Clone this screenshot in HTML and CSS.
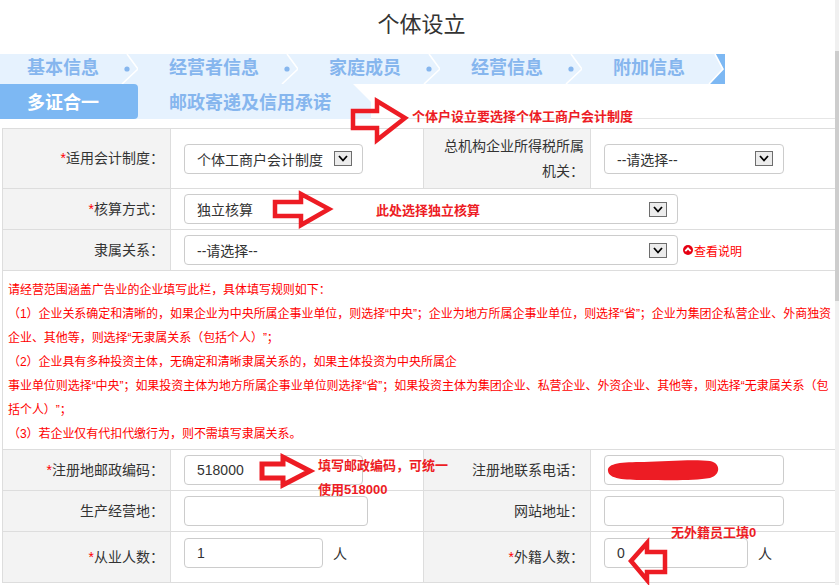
FILE: index.html
```html
<!DOCTYPE html>
<html lang="zh-CN">
<head>
<meta charset="utf-8">
<title>个体设立</title>
<link rel="stylesheet" href="styles.css">
</head>
<body>
<div class="page">
  <h1 class="title">个体设立</h1>

  <div class="steps">
    <div class="step first"><span class="step-label">基本信息</span><svg class="sep" viewBox="0 0 20 30"><circle cx="9" cy="15" r="2.6" fill="#86b6ee"/><polyline points="9,0 20,15 4,30" fill="none" stroke="#fff" stroke-width="1.6"/></svg></div>
    <div class="step"><span class="step-label">经营者信息</span><svg class="sep" viewBox="0 0 20 30"><circle cx="9" cy="15" r="2.6" fill="#86b6ee"/><polyline points="9,0 20,15 4,30" fill="none" stroke="#fff" stroke-width="1.6"/></svg></div>
    <div class="step"><span class="step-label">家庭成员</span><svg class="sep" viewBox="0 0 20 30"><circle cx="9" cy="15" r="2.6" fill="#86b6ee"/><polyline points="9,0 20,15 4,30" fill="none" stroke="#fff" stroke-width="1.6"/></svg></div>
    <div class="step"><span class="step-label">经营信息</span><svg class="sep" viewBox="0 0 20 30"><circle cx="9" cy="15" r="2.6" fill="#86b6ee"/><polyline points="9,0 20,15 4,30" fill="none" stroke="#fff" stroke-width="1.6"/></svg></div>
    <div class="step last"><span class="step-label">附加信息</span><svg class="sep end" viewBox="0 0 20 30"><rect x="0" y="0" width="20" height="30" fill="#7db8f3"/><polygon points="0,0 10,0 18,15 4,30 0,30" fill="#e6f2fe"/><polyline points="10,0 18,15 4,30" fill="none" stroke="#fff" stroke-width="1.6"/></svg></div>
  </div>

  <div class="subrow">
    <div class="subtabs">
      <div class="subtab active">多证合一</div>
      <div class="subtab">邮政寄递及信用承诺</div>
    </div>
    <div class="subrow-fill"></div>
  </div>

  <table class="form">
    <colgroup>
      <col class="c1"><col class="c2"><col class="c3"><col class="c4">
    </colgroup>
    <tr class="r1">
      <td class="lbl"><span class="req">*</span>适用会计制度：</td>
      <td class="val">
        <div class="sel w179"><span>个体工商户会计制度</span><span class="dd"><svg viewBox="0 0 16 13" width="16" height="13"><polyline points="4,4 8,8.5 12,4" fill="none" stroke="#000" stroke-width="1.8"/></svg></span></div>
      </td>
      <td class="lbl">总机构企业所得税所属机关：</td>
      <td class="val">
        <div class="sel w180"><span>--请选择--</span><span class="dd"><svg viewBox="0 0 16 13" width="16" height="13"><polyline points="4,4 8,8.5 12,4" fill="none" stroke="#000" stroke-width="1.8"/></svg></span></div>
      </td>
    </tr>
    <tr class="r2">
      <td class="lbl"><span class="req">*</span>核算方式：</td>
      <td class="val" colspan="3">
        <div class="sel wide"><span>独立核算</span><span class="dd"><svg viewBox="0 0 16 13" width="16" height="13"><polyline points="4,4 8,8.5 12,4" fill="none" stroke="#000" stroke-width="1.8"/></svg></span></div>
      </td>
    </tr>
    <tr class="r3">
      <td class="lbl">隶属关系：</td>
      <td class="val" colspan="3">
        <div class="inline">
          <div class="sel wide"><span>--请选择--</span><span class="dd"><svg viewBox="0 0 16 13" width="16" height="13"><polyline points="4,4 8,8.5 12,4" fill="none" stroke="#000" stroke-width="1.8"/></svg></span></div>
          <span class="help"><svg class="help-icon" viewBox="0 0 10 10" width="10" height="10"><circle cx="5" cy="5" r="5" fill="#e60012"/><polyline points="2.3,6.2 5,3.4 7.7,6.2" fill="none" stroke="#fff" stroke-width="1.8"/></svg>查看说明</span>
        </div>
      </td>
    </tr>
    <tr class="rn">
      <td class="note" colspan="4">
        <div class="note-text">请经营范围涵盖广告业的企业填写此栏，具体填写规则如下：<br>（1）企业关系确定和清晰的，如果企业为中央所属企事业单位，则选择“中央”；企业为地方所属企事业单位，则选择“省”；企业为集团企私营企业、外商独资<br>企业、其他等，则选择“无隶属关系（包括个人）”；<br>（2）企业具有多种投资主体，无确定和清晰隶属关系的，如果主体投资为中央所属企<br>事业单位则选择“中央”；如果投资主体为地方所属企事业单位则选择“省”；如果投资主体为集团企业、私营企业、外资企业、其他等，则选择“无隶属关系（包<br>括个人）”；<br>（3）若企业仅有代扣代缴行为，则不需填写隶属关系。</div>
      </td>
    </tr>
    <tr class="r4">
      <td class="lbl"><span class="req">*</span>注册地邮政编码：</td>
      <td class="val"><div class="inp w179">518000</div></td>
      <td class="lbl">注册地联系电话：</td>
      <td class="val"><div class="inp w180"></div></td>
    </tr>
    <tr class="r5">
      <td class="lbl">生产经营地：</td>
      <td class="val"><div class="inp w184"></div></td>
      <td class="lbl">网站地址：</td>
      <td class="val"><div class="inp w180"></div></td>
    </tr>
    <tr class="r6">
      <td class="lbl"><span class="req">*</span>从业人数：</td>
      <td class="val"><div class="inline"><div class="inp w139">1</div><span class="unit">人</span></div></td>
      <td class="lbl"><span class="req">*</span>外籍人数：</td>
      <td class="val"><div class="inline"><div class="inp w144">0</div><span class="unit">人</span></div></td>
    </tr>
  </table>

  <!-- annotations drawn over the screenshot -->
  <svg class="mark arrow1" width="62" height="48" viewBox="0 0 62 48"><polygon points="5,14 29,14 29,4 57,21 29,43 29,31 5,31" fill="none" stroke="#ed1c24" stroke-width="4.5"/></svg>
  <div class="ann ann1">个体户设立要选择个体工商户会计制度</div>

  <svg class="mark arrow2" width="64" height="40" viewBox="0 0 64 40"><polygon points="4,12 30,12 30,4 58,19 30,35 30,26 4,26" fill="none" stroke="#ed1c24" stroke-width="4.5"/></svg>
  <div class="ann ann2">此处选择独立核算</div>

  <svg class="mark arrow3" width="56" height="35" viewBox="0 0 56 35"><polygon points="4,10 25,10 25,3 52,17 25,31 25,24 4,24" fill="none" stroke="#ed1c24" stroke-width="5"/></svg>
  <div class="ann ann3">填写邮政编码，可统一<br>使用518000</div>

  <svg class="mark blob" width="118" height="26" viewBox="0 0 118 26"><path d="M4,14 C3,6 18,5 40,5 C62,4 92,2 106,4 C117,6 117,18 106,21 C90,24 62,23 40,23 C20,23 5,22 4,14 Z" fill="#ed1c24"/></svg>

  <div class="ann ann4">无外籍员工填0</div>
  <svg class="mark arrow4" width="42" height="47" viewBox="0 0 42 47"><polygon points="4,23 20,5 20,14 38,14 38,34 20,34 20,42" fill="none" stroke="#ed1c24" stroke-width="4.5"/></svg>

  <div class="scrollbar"><div class="thumb"></div></div>
</div>
</body>
</html>
```

FILE: styles.css
```css
html, body {
  margin: 0;
  padding: 0;
  background: #fff;
}

body {
  overflow: hidden;
  font-family: "Liberation Sans", "Noto Sans CJK SC", sans-serif;
  color: #333;
  text-spacing-trim: space-all;
}

.page {
  position: relative;
  width: 839px;
  height: 585px;
  overflow: hidden;
}

.title {
  margin: 0;
  padding: 10px 0 14px 4px;
  font-size: 22px;
  line-height: 30px;
  font-weight: normal;
  text-align: center;
  color: #333;
}

/* step bar */
.steps {
  display: flex;
  width: max-content;
  height: 30px;
  background: #e6f2fe;
}

.step {
  display: flex;
  align-items: center;
  padding-left: 31px;
}

.step.first {
  padding-left: 27px;
}

.step-label {
  box-sizing: border-box;
  height: 30px;
  padding-bottom: 5px;
  font-size: 18px;
  font-weight: bold;
  line-height: 25px;
  color: #86b6ee;
  font-family: "Noto Sans CJK SC", sans-serif;
}

.sep {
  display: block;
  width: 20px;
  height: 30px;
  margin-left: 19px;
}

.sep.end {
  margin-left: 20px;
}

/* sub tabs */
.subrow {
  display: flex;
  height: 35px;
}

.subtabs {
  display: flex;
  height: 35px;
  background: #e6f2fe;
  clip-path: polygon(0 0, calc(100% - 18px) 0, 100% 18px, 100% 100%, 0 100%);
}

.subtab {
  padding: 0 40px 0 31px;
  font-size: 18px;
  font-weight: bold;
  line-height: 35px;
  color: #86b6ee;
  font-family: "Noto Sans CJK SC", sans-serif;
}

.subtab.active {
  padding: 0 39px 0 27px;
  background: #7db8f3;
  color: #fff;
  border-radius: 0 4px 4px 0;
}

.subrow-fill {
  flex: 1;
  box-sizing: border-box;
  height: 35px;
  border-bottom: 1px solid #e6e6e6;
}

/* form table */
.form {
  margin: 9px 0 0 2px;
  width: 836px;
  table-layout: fixed;
  border-collapse: collapse;
}

.c1 { width: 168px; }
.c2 { width: 253px; }
.c3 { width: 167px; }
.c4 { width: 248px; }

.form td {
  border: 1px solid #dddddd;
  padding: 0;
  vertical-align: middle;
}

.form td.lbl {
  background: #f3f3f3;
  text-align: right;
  padding: 0 6px 0 10px;
  font-size: 14px;
  line-height: 25px;
  color: #333;
}

.form td.val {
  padding-left: 13px;
}

.r1 td { height: 59px; }
.r2 td, .r3 td, .r4 td, .r5 td { height: 40px; }
.r6 td { height: 50px; }
.form .r6 td.val { padding-bottom: 8px; height: 42px; }

.req {
  color: #f00;
}

.sel {
  display: flex;
  align-items: center;
  justify-content: space-between;
  box-sizing: border-box;
  height: 30px;
  padding: 0 10px 0 12px;
  border: 1px solid #cccccc;
  border-radius: 4px;
  background: #fff;
  font-size: 14px;
  color: #333;
}

.w179 { width: 179px; }
.w180 { width: 180px; }
.w184 { width: 184px; }
.w139 { width: 139px; }
.w144 { width: 144px; }
.sel.wide { width: 494px; }

.dd {
  display: flex;
  align-items: center;
  justify-content: center;
  box-sizing: border-box;
  width: 18px;
  height: 15px;
  border: 1px solid #6d6d6d;
  background: #ececec;
}

.dd svg {
  display: block;
}

.inline {
  display: flex;
  align-items: center;
}

.help {
  display: flex;
  align-items: center;
  margin-left: 5px;
  font-size: 12px;
  color: #f00;
}

.help-icon {
  display: block;
  margin-right: 1px;
}

.inp {
  box-sizing: border-box;
  height: 30px;
  padding-left: 12px;
  border: 1px solid #cccccc;
  border-radius: 4px;
  background: #fff;
  font-size: 14px;
  line-height: 28px;
  color: #333;
}

.unit {
  margin-left: 10px;
  font-size: 14px;
  color: #333;
}

.form td.note {
  padding: 7px 0 3px 5px;
}

.note-text {
  white-space: nowrap;
  font-size: 12px;
  line-height: 24px;
  letter-spacing: -0.05px;
  color: #f00;
}

/* annotations layered over the page */
.mark {
  position: absolute;
  display: block;
  overflow: visible;
}

.arrow1 { left: 348px; top: 97px; }
.arrow2 { left: 271px; top: 190px; }
.arrow3 { left: 258px; top: 454px; }
.arrow4 { left: 627px; top: 538px; }
.blob { left: 604px; top: 457px; }

.ann {
  position: absolute;
  white-space: nowrap;
  font-size: 13px;
  font-weight: bold;
  line-height: 16px;
  color: #ed1c24;
}

.ann1 { left: 412px; top: 109px; }
.ann2 { left: 376px; top: 203px; }
.ann3 { left: 318px; top: 454px; line-height: 24px; }
.ann4 { left: 671px; top: 525px; }

/* overlay scrollbar */
.scrollbar {
  position: absolute;
  top: 0;
  right: 0;
  width: 4px;
  height: 585px;
  background: #f0f0f0;
}

.thumb {
  margin-top: 51px;
  height: 250px;
  background: #cdcdcd;
}
```
